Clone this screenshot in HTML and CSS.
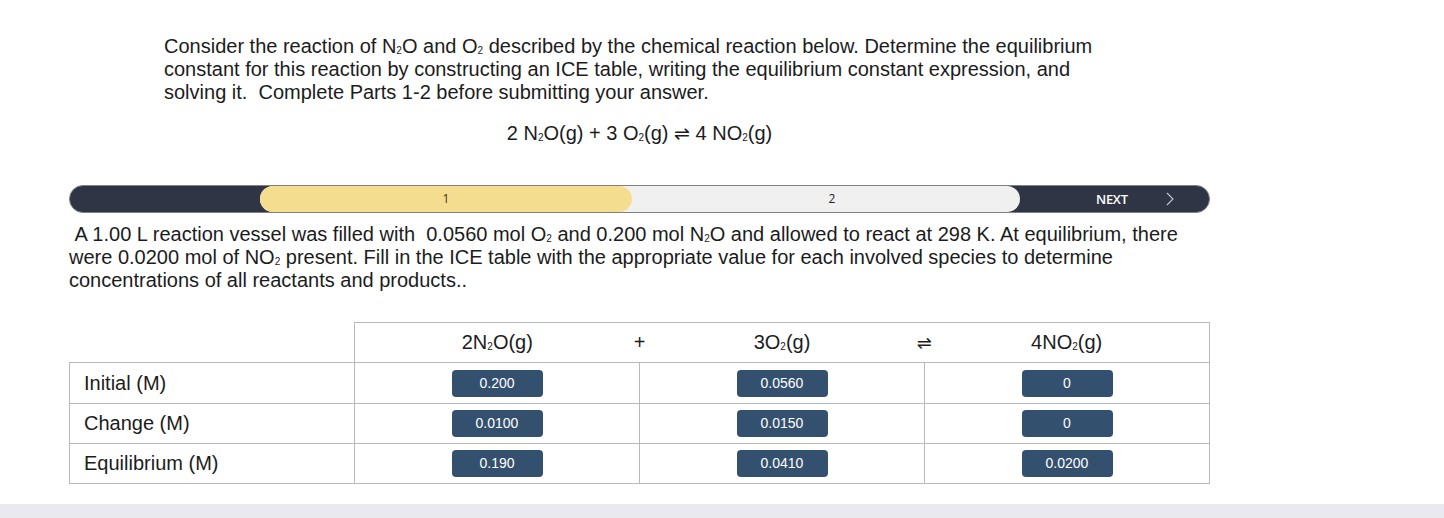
FILE: index.html
```html
<!DOCTYPE html>
<html>
<head>
<meta charset="utf-8">
<link rel="stylesheet" href="styles.css">
</head>
<body>
<div class="intro">Consider the reaction of N<span class="sub">2</span>O and O<span class="sub">2</span> described by the chemical reaction below. Determine the equilibrium constant for this reaction by constructing an ICE table, writing the equilibrium constant expression, and solving it.&nbsp; Complete Parts 1-2 before submitting your answer.</div>
<div class="equation">2 N<span class="sub">2</span>O(g) + 3 O<span class="sub">2</span>(g) <span class="eq">⇌</span> 4 NO<span class="sub">2</span>(g)</div>

<div class="bar">
  <div class="bar-spacer"></div>
  <div class="steps">
    <div class="step step-active">1</div>
    <div class="step step-next">2</div>
  </div>
  <div class="next">
    <span class="next-label">NEXT</span>
    <svg class="chev" width="8" height="14" viewBox="0 0 8 14"><path d="M1 1 L7 7 L1 13" fill="none" stroke="#c4c6cc" stroke-width="1.1"/></svg>
  </div>
</div>

<p class="para">&nbsp;A 1.00 L reaction vessel was filled with&nbsp; 0.0560 mol O<span class="sub">2</span> and 0.200 mol N<span class="sub">2</span>O and allowed to react at 298 K. At equilibrium, there were 0.0200 mol of NO<span class="sub">2</span> present. Fill in the ICE table with the appropriate value for each involved species to determine concentrations of all reactants and products..</p>

<div class="ice">
  <div class="blank"></div>
  <div class="head">
    <div class="sp">2N<span class="sub">2</span>O(g)</div>
    <div class="op">+</div>
    <div class="sp">3O<span class="sub">2</span>(g)</div>
    <div class="op op-eq">⇌</div>
    <div class="sp">4NO<span class="sub">2</span>(g)</div>
  </div>

  <div class="cell label r1">Initial (M)</div>
  <div class="cell r1"><span class="val">0.200</span></div>
  <div class="cell r1"><span class="val">0.0560</span></div>
  <div class="cell r1 last"><span class="val">0</span></div>

  <div class="cell label r2">Change (M)</div>
  <div class="cell r2"><span class="val">0.0100</span></div>
  <div class="cell r2"><span class="val">0.0150</span></div>
  <div class="cell r2 last"><span class="val">0</span></div>

  <div class="cell label r3">Equilibrium (M)</div>
  <div class="cell r3"><span class="val">0.190</span></div>
  <div class="cell r3"><span class="val">0.0410</span></div>
  <div class="cell r3 last"><span class="val">0.0200</span></div>
</div>

<div class="footer"></div>
</body>
</html>
```

FILE: styles.css
```css
html, body {
  margin: 0;
  padding: 0;
  background: #ffffff;
}
body {
  font-family: "Liberation Sans", Arial, sans-serif;
  font-size: 20px;
  line-height: 23px;
  color: #1c1c1c;
  overflow: hidden;
  height: 518px;
}
.sub {
  font-size: 10px;
  line-height: 0;
  vertical-align: -1px;
}
.intro {
  padding-top: 35px;
  margin-left: 164px;
  width: 945px;
}
.equation {
  margin-top: 18px;
  margin-left: 69px;
  width: 1141px;
  text-align: center;
}
.eq {
  font-family: "DejaVu Sans", sans-serif;
  font-size: 19px;
  line-height: 0;
}
.bar {
  margin-top: 40px;
  margin-left: 69px;
  width: 1141px;
  height: 28px;
  box-sizing: border-box;
  border: 1px solid #808080;
  border-radius: 14px;
  background: #2f3545;
  display: flex;
  overflow: hidden;
  font-family: "Open Sans", "DejaVu Sans", sans-serif;
  font-size: 12px;
  line-height: 26px;
}
.bar-spacer {
  width: 190px;
  flex: none;
}
.steps {
  width: 760px;
  flex: none;
  display: flex;
  background: #f0f0f0;
  border-radius: 13px;
}
.step {
  text-align: center;
}
.step-active {
  width: 372px;
  background: #f5dd8f;
  border-radius: 13px;
  color: #3a3420;
}
.step-next {
  flex: 1;
  padding-left: 12px;
  color: #222;
}
.next {
  flex: 1;
  display: flex;
  align-items: center;
  padding-left: 76px;
  color: #ffffff;
}
.next-label {
  font-size: 13px;
  font-weight: 600;
  letter-spacing: -0.3px;
}
.chev {
  margin-left: 38px;
}
.para {
  margin: 10px 0 0 69px;
  width: 1141px;
}
.ice {
  margin-top: 30px;
  margin-left: 69px;
  width: 1141px;
  display: grid;
  grid-template-columns: 285px 285px 285px 286px;
}
.blank {
  height: 40px;
}
.head {
  grid-column: 2 / span 3;
  height: 40px;
  box-sizing: border-box;
  border: 1px solid #bababa;
  border-bottom: none;
  display: grid;
  grid-template-columns: 1fr 0 1fr 0 1fr;
  align-items: center;
}
.sp {
  text-align: center;
}
.op {
  display: flex;
  justify-content: center;
  white-space: nowrap;
}
.op-eq {
  font-family: "DejaVu Sans", sans-serif;
  font-size: 18px;
}
.cell {
  box-sizing: border-box;
  border-top: 1px solid #bababa;
  border-left: 1px solid #bababa;
  display: flex;
  align-items: center;
  justify-content: center;
}
.cell.last {
  border-right: 1px solid #bababa;
}
.cell.label {
  justify-content: flex-start;
  padding-left: 14px;
}
.r1 { height: 41px; }
.r2 { height: 40px; }
.r3 { height: 41px; border-bottom: 1px solid #bababa; }
.val {
  width: 91px;
  height: 27px;
  border-radius: 4px;
  background: #34506f;
  color: #ffffff;
  font-size: 14px;
  line-height: 27px;
  text-align: center;
}
.footer {
  margin-top: 20px;
  height: 20px;
  background: #e9e9ef;
}
```
